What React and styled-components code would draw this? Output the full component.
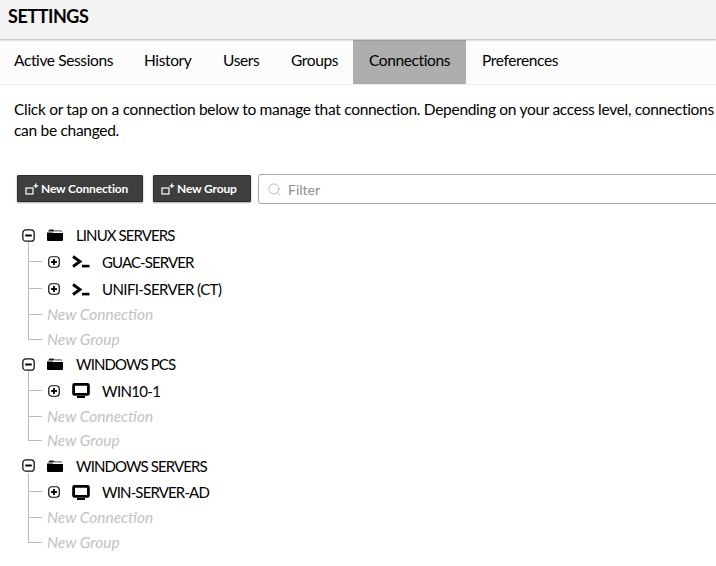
import styled, { createGlobalStyle } from "styled-components";
import { Search } from "lucide-react";

const GlobalStyle = createGlobalStyle`
  html, body {
    margin: 0;
    padding: 0;
    background: #fff;
    overflow: hidden;
  }
  body {
    font-family: "Lato", "Liberation Sans", sans-serif;
    color: #000;
  }
`;

const Page = styled.div`
  width: 716px;
  height: 566px;
  overflow: hidden;
`;

const Header = styled.header`
  height: 39px;
  background: #f3f3f3;
  box-shadow: 0 1px 2px rgba(0, 0, 0, 0.3);
  position: relative;
  z-index: 1;
  display: flex;
  align-items: flex-start;
  padding: 5px 8px 0;
  box-sizing: border-box;
`;

const Title = styled.h1`
  margin: 0;
  font-size: 18px;
  line-height: 22px;
  font-weight: 700;
  letter-spacing: -0.45px;
`;

const Tabs = styled.nav`
  height: 44px;
  background: #fcfcfc;
  border-bottom: 1px solid #eee;
  display: flex;
  margin-top: 1px;
`;

const Tab = styled.a`
  width: ${(p) => p.$width}px;
  height: 44px;
  padding: 0 0 5px ${(p) => p.$pad}px;
  display: flex;
  align-items: center;
  box-sizing: border-box;
  font-size: 15.5px;
  letter-spacing: -0.38px;
  white-space: nowrap;
  color: #000;
  background: ${(p) => (p.$active ? "#aeaeae" : "transparent")};
`;

const Intro = styled.p`
  margin: 0;
  padding: 14px 0 0 14px;
  width: 800px;
  font-size: 15.5px;
  line-height: 20.5px;
  letter-spacing: -0.3px;
`;

const Toolbar = styled.div`
  display: flex;
  align-items: flex-start;
  gap: 10px;
  margin: 35px 0 0 17px;
`;

const ActionButton = styled.button`
  flex: none;
  height: 27px;
  width: ${(p) => p.$width}px;
  padding: 0 0 0 7px;
  display: flex;
  align-items: center;
  gap: 2px;
  background: #3e3e3e;
  border: 1px solid #2c2c2c;
  border-radius: 1px;
  box-shadow: 0 1px 2px rgba(0, 0, 0, 0.35);
  color: #fff;
  font-family: inherit;
  font-size: 12px;
  font-weight: 700;
  letter-spacing: -0.15px;
  white-space: nowrap;
  box-sizing: border-box;
`;

const FilterBox = styled.label`
  flex: none;
  width: 480px;
  height: 30px;
  margin: -1px 0 0 -3px;
  border: 1px solid #a8a8a8;
  border-radius: 3px;
  display: flex;
  align-items: center;
  gap: 6px;
  padding-left: 8px;
  box-sizing: border-box;
  color: #8f8f8f;
  font-size: 14px;
`;

const Tree = styled.div`
  margin: 18px 0 0 22px;
`;

const Group = styled.section`
  position: relative;
  &::before {
    content: "";
    position: absolute;
    left: 6px;
    top: 20px;
    height: calc(100% - 32px);
    width: 1px;
    background: #bbb;
  }
`;

const GroupRow = styled.div`
  height: 25px;
  padding-top: ${(p) => p.$shift}px;
  display: flex;
  align-items: center;
  box-sizing: border-box;
  font-size: 15px;
  letter-spacing: -0.9px;
  white-space: nowrap;
`;

const Toggle = styled.svg`
  flex: none;
  width: ${(p) => p.$size}px;
  height: ${(p) => p.$size}px;
  background: #fff;
  position: relative;
`;

const FolderIcon = styled.svg`
  flex: none;
  width: 16px;
  height: 12px;
  margin: 0 13px 0 12px;
`;

const ChildRow = styled.div`
  position: relative;
  height: ${(p) => p.$height}px;
  display: flex;
  align-items: center;
  padding: ${(p) => p.$shift}px 0 0 ${(p) => p.$indent}px;
  box-sizing: border-box;
  font-size: 15px;
  white-space: nowrap;
  &::before {
    content: "";
    position: absolute;
    left: 6px;
    top: 50%;
    width: 14px;
    height: 1px;
    background: #bbb;
  }
`;

const ItemName = styled.span`
  letter-spacing: ${(p) => p.$spacing}px;
`;

const NewLink = styled.span`
  color: #c2c2c2;
  font-style: italic;
  font-size: 15.5px;
`;

const ConnectionIcon = styled.svg`
  flex: none;
  width: 18px;
  height: 15px;
  margin: 0 12px 0 12px;
`;

const ExpandIcon = ({ minus, size }) => (
  <Toggle $size={size} viewBox="0 0 12 12">
    <rect x="0.75" y="0.75" width="10.5" height="10.5" rx="3" fill="#fff" stroke="#111" strokeWidth="1.2" />
    <path d="M3 6h6" stroke="#000" strokeWidth="1.8" />
    {!minus && <path d="M6 3v6" stroke="#000" strokeWidth="1.8" />}
  </Toggle>
);

const Folder = () => (
  <FolderIcon viewBox="0 0 16 12">
    <path d="M0 3.5 V11 a1 1 0 0 0 1 1 H15 a1 1 0 0 0 1-1 V4 H6.5 L5 3.5 Z" fill="#000" />
    <path d="M1 2.6 L2.4 0.6 H6.2 L7.2 1.6 H14.6 V3 H6.5 L5 2.6 Z" fill="#222" />
    <path d="M6 2.5 H14" stroke="#fff" strokeWidth="0.7" />
  </FolderIcon>
);

const Terminal = () => (
  <ConnectionIcon viewBox="0 0 18 15">
    <path d="M1 2.5 L8 7.5 L1 12.5" fill="none" stroke="#000" strokeWidth="2.8" />
    <rect x="10" y="10.8" width="7.5" height="2.6" fill="#000" />
  </ConnectionIcon>
);

const Monitor = () => (
  <ConnectionIcon viewBox="0 0 18 15">
    <rect x="1.6" y="1.4" width="14.8" height="10" rx="1" fill="none" stroke="#000" strokeWidth="2.8" />
    <rect x="5" y="13" width="8" height="2" fill="#000" />
  </ConnectionIcon>
);

const AddIcon = () => (
  <svg width="14" height="14" viewBox="0 0 14 14">
    <rect x="1" y="6" width="7" height="6" fill="none" stroke="#fff" strokeWidth="1.2" />
    <path d="M10.8 1.5v4.6M8.5 3.8h4.6" stroke="#fff" strokeWidth="1.3" />
  </svg>
);

const groups = [
  {
    name: "LINUX SERVERS",
    items: [
      { name: "GUAC-SERVER", type: "ssh", spacing: -0.9 },
      { name: "UNIFI-SERVER (CT)", type: "ssh", spacing: -0.6 },
    ],
  },
  { name: "WINDOWS PCS", items: [{ name: "WIN10-1", type: "rdp", spacing: -0.65 }] },
  { name: "WINDOWS SERVERS", items: [{ name: "WIN-SERVER-AD", type: "rdp", spacing: -0.85 }] },
];

const tabs = [
  { label: "Active Sessions", pad: 14, width: 128 },
  { label: "History", pad: 16, width: 79 },
  { label: "Users", pad: 16, width: 68 },
  { label: "Groups", pad: 16, width: 78 },
  { label: "Connections", pad: 16, width: 113, active: true },
  { label: "Preferences", pad: 16, width: 110 },
];

export default function App() {
  return (
    <Page>
      <GlobalStyle />
      <Header>
        <Title>SETTINGS</Title>
      </Header>
      <Tabs>
        {tabs.map((tab) => (
          <Tab key={tab.label} $pad={tab.pad} $width={tab.width} $active={tab.active}>
            {tab.label}
          </Tab>
        ))}
      </Tabs>
      <Intro>
        Click or tap on a connection below to manage that connection. Depending on your access level, connections
        <br />
        can be changed.
      </Intro>
      <Toolbar>
        <ActionButton $width={126}>
          <AddIcon />
          New Connection
        </ActionButton>
        <ActionButton $width={98}>
          <AddIcon />
          New Group
        </ActionButton>
        <FilterBox>
          <Search size={15} strokeWidth={1.2} color="#aaa" />
          Filter
        </FilterBox>
      </Toolbar>
      <Tree>
        {groups.map((group) => (
          <Group key={group.name}>
            <GroupRow $shift={1}>
              <ExpandIcon minus size={13} />
              <Folder />
              {group.name}
            </GroupRow>
            {group.items.map((item) => (
              <ChildRow key={item.name} $height={27.5} $shift={2} $indent={26}>
                <ExpandIcon size={12} />
                {item.type === "ssh" ? <Terminal /> : <Monitor />}
                <ItemName $spacing={item.spacing}>{item.name}</ItemName>
              </ChildRow>
            ))}
            <ChildRow $height={24.5} $shift={0} $indent={25}>
              <NewLink>New Connection</NewLink>
            </ChildRow>
            <ChildRow $height={24.5} $shift={0} $indent={25}>
              <NewLink>New Group</NewLink>
            </ChildRow>
          </Group>
        ))}
      </Tree>
    </Page>
  );
}
